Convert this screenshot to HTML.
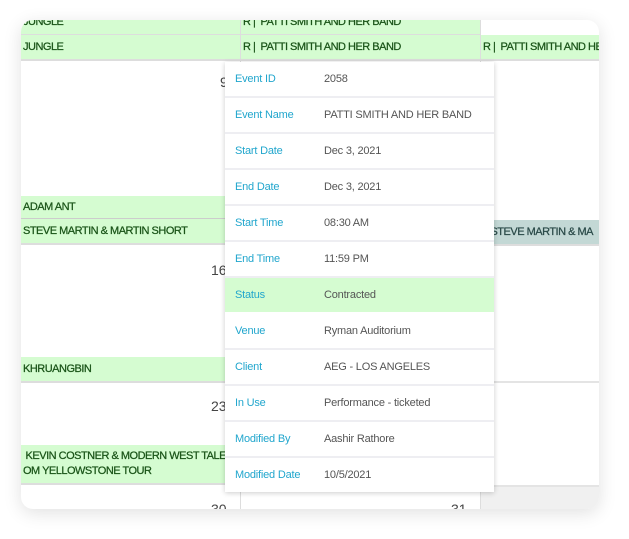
<!DOCTYPE html>
<html><head><style>
*{margin:0;padding:0;box-sizing:border-box}
body{width:629px;height:539px;background:#fff;font-family:"Liberation Sans",sans-serif;position:relative;overflow:hidden}
.card{position:absolute;left:21px;top:20px;width:578px;height:489px;border-radius:12px;overflow:hidden;background:#fff;box-shadow:0 4px 18px rgba(0,0,0,.12)}
.abs{position:absolute}
.bar{position:absolute;background:#d5fcd1;color:#1a5418;font-size:11px;padding-left:2px;line-height:24px;white-space:nowrap;overflow:hidden;letter-spacing:-.5px;border-bottom:2px solid #ddd;-webkit-text-stroke:.25px #1a5418}
.num{position:absolute;font-size:14px;color:#444}
.vl{position:absolute;width:1px;background:#ddd}
.hl{position:absolute;height:2px;background:#e4e4e4}
.pop{position:absolute;left:225px;top:62px;width:269px;height:430px;background:#fff;box-shadow:0 1px 5px rgba(0,0,0,.2)}
.row{height:36px;border-bottom:2px solid #eeeef2;font-size:11px;line-height:34px;position:relative}
.row span{position:absolute}
.l{left:10px;color:#21a6cd;letter-spacing:-.2px}.v{left:99px;color:#555;letter-spacing:-.2px}
</style></head><body>
<div class="card">
<div class="bar" style="left:0;top:-10px;width:219px">JUNGLE</div>
<div class="bar" style="left:220px;top:-10px;width:239px">R |&nbsp; PATTI SMITH AND HER BAND</div>
<div class="bar" style="left:0;top:15px;width:219px">JUNGLE</div>
<div class="bar" style="left:220px;top:15px;width:239px">R |&nbsp; PATTI SMITH AND HER BAND</div>
<div class="bar" style="left:460px;top:15px;width:118px">R |&nbsp; PATTI SMITH AND HE</div>
<div class="vl" style="left:219px;top:0;height:489px"></div>
<div class="vl" style="left:459px;top:0;height:489px"></div>
<div class="num" style="left:199px;top:54px">9</div>
<div class="bar" style="left:0;top:176px;width:219px;border-bottom:1px solid #ccc;line-height:22px">ADAM ANT</div>
<div class="bar" style="left:0;top:199px;width:219px">STEVE MARTIN &amp; MARTIN SHORT</div>
<div class="bar" style="left:460px;top:200px;width:118px;background:#c3d8d5;color:#2a4a48;-webkit-text-stroke:.25px #2a4a48">|&nbsp; STEVE MARTIN &amp; MA</div>
<div class="num" style="left:190px;top:242px">16</div>
<div class="bar" style="left:0;top:337px;width:219px">KHRUANGBIN</div>
<div class="hl" style="left:460px;top:361px;width:118px"></div>
<div class="num" style="left:190px;top:378px">23</div>
<div class="bar" style="left:0;top:425px;width:219px;line-height:15px;padding-top:4px;height:40px">&nbsp;KEVIN COSTNER &amp; MODERN WEST TALES<br>OM YELLOWSTONE TOUR</div>
<div class="abs" style="left:460px;top:465px;width:118px;height:30px;background:#f0f0f0;border-top:2px solid #e4e4e4"></div>
<div class="num" style="left:190px;top:481px">30</div>
<div class="num" style="left:430px;top:481px">31</div>
</div>
<div class="pop">
<div class="row"><span class="l">Event ID</span><span class="v">2058</span></div>
<div class="row"><span class="l">Event Name</span><span class="v">PATTI SMITH AND HER BAND</span></div>
<div class="row"><span class="l">Start Date</span><span class="v">Dec 3, 2021</span></div>
<div class="row"><span class="l">End Date</span><span class="v">Dec 3, 2021</span></div>
<div class="row"><span class="l">Start Time</span><span class="v">08:30 AM</span></div>
<div class="row"><span class="l">End Time</span><span class="v">11:59 PM</span></div>
<div class="row" style="background:#d5fcd1;border-bottom-color:#fff"><span class="l">Status</span><span class="v">Contracted</span></div>
<div class="row"><span class="l">Venue</span><span class="v">Ryman Auditorium</span></div>
<div class="row"><span class="l">Client</span><span class="v">AEG - LOS ANGELES</span></div>
<div class="row"><span class="l">In Use</span><span class="v">Performance - ticketed</span></div>
<div class="row"><span class="l">Modified By</span><span class="v">Aashir Rathore</span></div>
<div class="row" style="border-bottom:none"><span class="l">Modified Date</span><span class="v">10/5/2021</span></div>
</div>
</body></html>
